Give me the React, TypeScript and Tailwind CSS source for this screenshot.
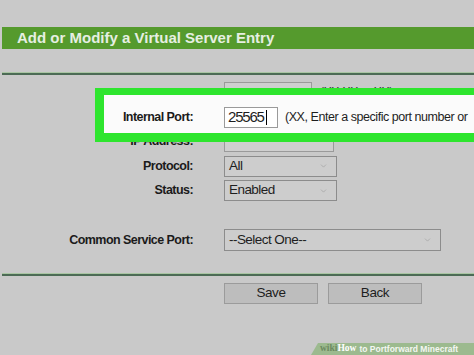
import React from "react";
import { ChevronDown } from "lucide-react";

const font = { fontFamily: '"Liberation Sans", Arial, sans-serif' };

function Label({ children }: { children: React.ReactNode }) {
  return (
    <span className="w-[193px] shrink-0 text-right text-[12.5px] font-bold tracking-[-0.55px] text-[#1b1b1b]">
      {children}
    </span>
  );
}

function Select({ value, width }: { value: string; width: string }) {
  return (
    <div
      className={`relative ml-[31px] flex h-full items-center border border-[#8c8c8c] bg-[#cdcdcd] pl-[4px] text-[13.5px] tracking-[-0.55px] text-[#1e1e1e] ${width}`}
    >
      {value}
      <ChevronDown className="absolute right-[8px] top-1/2 -translate-y-1/2 text-[#9a9a9a]" size={9} strokeWidth={1.5} />
    </div>
  );
}

function Divider() {
  return (
    <div className="ml-[2px] flex flex-col">
      <div className="h-px bg-[#a9c5a3]" />
      <div className="h-[2px] bg-[#4c6b55]" />
    </div>
  );
}

export default function App() {
  return (
    <div className="relative h-[355px] w-[474px] overflow-hidden bg-[#c9c9c9]" style={font}>
      <div className="h-[27px]" />
      <div className="ml-[2px] flex h-[22px] items-center bg-[#559a2d] pl-[15px] text-[15px] font-bold text-[#e6efe2]">
        Add or Modify a Virtual Server Entry
      </div>
      <div className="h-[23px]" />
      <Divider />

      <div className="mt-[7px] flex flex-col gap-[3.5px]">
        <div className="flex h-[21px] items-start">
          <span className="mt-[2px] w-[193px] shrink-0 text-right text-[12.5px] font-bold tracking-[-0.55px] text-[#1b1b1b]">
            External Port:
          </span>
          <div className="ml-[31px] h-full w-[88px] border border-[#9a9a9a] bg-[#cfcfcf]" />
          <span className="ml-[8px] mt-[1px] text-[12px] tracking-[-0.35px] text-[#333]">(XX-XX or XX)</span>
        </div>
        <div className="flex h-[21px] items-center">
          <Label>Internal Port:</Label>
          <div className="ml-[31px] h-full w-[54px] border border-[#9a9a9a] bg-[#cfcfcf]" />
        </div>
        <div className="flex h-[21px] items-center">
          <Label>IP Address:</Label>
          <div className="ml-[31px] h-full w-[110px] border border-[#9a9a9a] bg-[#cfcfcf]" />
        </div>
        <div className="flex h-[21px] items-center">
          <Label>Protocol:</Label>
          <Select value="All" width="w-[113px]" />
        </div>
        <div className="flex h-[21px] items-center">
          <Label>Status:</Label>
          <Select value="Enabled" width="w-[113px]" />
        </div>
      </div>

      <div className="mt-[28px] flex h-[22px] items-center">
        <Label>Common Service Port:</Label>
        <Select value="--Select One--" width="w-[217px]" />
      </div>

      <div className="h-[22px]" />
      <Divider />

      <div className="ml-[224px] mt-[7px] flex gap-[10px]">
        <button className="flex h-[21px] w-[94px] items-center justify-center border border-[#9b9b9b] bg-[#bdbdbd] text-[13.5px] tracking-[-0.4px] text-[#1e1e1e]">
          Save
        </button>
        <button className="flex h-[21px] w-[94px] items-center justify-center border border-[#9b9b9b] bg-[#bdbdbd] text-[13.5px] tracking-[-0.4px] text-[#1e1e1e]">
          Back
        </button>
      </div>

      {/* highlight callout over the Internal Port row */}
      <div className="absolute left-[95px] top-[88px] h-[54px] w-[395px] border-x-[9px] border-b-[9px] border-t-[7px] border-[#2ee52e] bg-[#fbfbfb]">
        <div className="mt-[12px] flex h-[21px] items-center">
          <span className="w-[89px] shrink-0 text-right text-[12.5px] font-bold tracking-[-0.55px] text-[#1b1b1b]">
            Internal Port:
          </span>
          <div className="ml-[31px] flex h-full w-[54px] items-center border border-[#9a9a9a] bg-white pl-[3px] text-[15px] tracking-[-1.2px] text-[#1e1e1e]">
            25565
            <span className="ml-[2px] h-[15px] w-px bg-black" />
          </div>
          <span className="ml-[7px] whitespace-nowrap text-[12.5px] tracking-[-0.45px] text-[#1e1e1e]">
            (XX, Enter a specific port number or
          </span>
        </div>
      </div>

      {/* wikiHow badge */}
      <div className="absolute bottom-0 right-0 flex h-[12px] w-[163px] items-center bg-[#9cba8f] pl-[9px] [clip-path:polygon(7px_0,100%_0,100%_100%,0_100%)]">
        <span className="text-[9.5px] font-bold leading-none text-[#6c8a60]" style={{ fontFamily: '"Liberation Serif", serif' }}>
          wiki
        </span>
        <span className="text-[9.5px] font-bold leading-none text-white" style={{ fontFamily: '"Liberation Serif", serif' }}>
          How
        </span>
        <span className="ml-[3px] text-[8.5px] font-bold leading-none text-[#f4f7f2]">
          to Portforward Minecraft
        </span>
      </div>
    </div>
  );
}
